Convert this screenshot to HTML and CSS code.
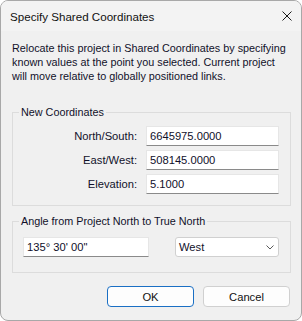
FILE: index.html
```html
<!DOCTYPE html>
<html>
<head>
<meta charset="utf-8">
<link rel="stylesheet" href="styles.css">
</head>
<body>
<div class="window">
  <div class="titlebar">
    <span class="title">Specify Shared Coordinates</span>
    <svg class="close" width="10" height="10" viewBox="0 0 10 10"><path d="M0.5 0.5 L9.5 9.5 M9.5 0.5 L0.5 9.5" /></svg>
  </div>
  <div class="client">
    <p class="desc">Relocate this project in Shared Coordinates by specifying<br>known values at the point you selected. Current project<br>will move relative to globally positioned links.</p>
    <fieldset class="group coords">
      <legend>New Coordinates</legend>
      <div class="grid">
        <label class="lbl">North/South:</label><div class="field">6645975.0000</div>
        <label class="lbl">East/West:</label><div class="field">508145.0000</div>
        <label class="lbl">Elevation:</label><div class="field">5.1000</div>
      </div>
    </fieldset>
    <fieldset class="group angle">
      <legend>Angle from Project North to True North</legend>
      <div class="angle-row">
        <div class="field angle-field">135° 30' 00"</div>
        <div class="select"><span>West</span><svg class="chev" width="8" height="5" viewBox="0 0 8 5"><path d="M0.5 0.5 L4 4 L7.5 0.5" /></svg></div>
      </div>
    </fieldset>
    <div class="buttons">
      <button class="btn primary">OK</button>
      <button class="btn">Cancel</button>
    </div>
  </div>
</div>
</body>
</html>
```
FILE: styles.css
```css
* { box-sizing: border-box; }
body {
  margin: 0;
  background: #ffffff;
  font-family: "Liberation Sans", "Segoe UI", sans-serif;
  font-size: 10.8px;
  color: #10102a;
}
.window {
  width: 302px;
  height: 321px;
  border: 1px solid #a8a8a8;
  border-radius: 8px;
  background: #f0f0f0;
  overflow: hidden;
  display: flex;
  flex-direction: column;
}
.titlebar {
  height: 30px;
  flex: none;
  background: #f3f3f3;
  display: flex;
  align-items: center;
  justify-content: space-between;
  padding: 0 9px;
}
.title {
  font-size: 11.6px;
  color: #111111;
}
.close path {
  stroke: #1a1a1a;
  stroke-width: 1;
  fill: none;
}
.client {
  padding: 0 10px 0 11px;
}
.desc {
  margin: 10px 0 0 0;
  line-height: 14px;
  white-space: nowrap;
}
.group {
  margin: 22px 0 0 0;
  border: 1px solid #dcdcdc;
  padding: 7px 11px 11px 0;
  min-width: 0;
}
.group legend {
  padding: 0 2px;
  margin-left: 6px;
  line-height: 14px;
}
.grid {
  display: grid;
  grid-template-columns: 1fr 133px;
  column-gap: 9px;
  row-gap: 4px;
}
.lbl {
  text-align: right;
  line-height: 20px;
  font-size: 11.2px;
}
.field {
  height: 20px;
  background: #ffffff;
  border: 1px solid #e6e6e6;
  border-bottom-color: #8a8a8a;
  padding-left: 3px;
  line-height: 18px;
  white-space: nowrap;
  font-size: 11.2px;
}
.group.angle {
  margin-top: 8px;
  padding: 9px 11px 15px 0;
}
.angle-row {
  display: flex;
  gap: 26px;
  padding-left: 10px;
}
.angle-field {
  width: 126px;
}
.select {
  width: 104px;
  height: 20px;
  background: #ffffff;
  border: 1px solid #d0d0d0;
  border-radius: 3px;
  padding: 0 4px 0 3px;
  display: flex;
  align-items: center;
  justify-content: space-between;
  line-height: 18px;
  font-size: 11.2px;
}
.chev path {
  stroke: #5a5a5a;
  stroke-width: 1;
  fill: none;
}
.buttons {
  margin-top: 13px;
  display: flex;
  justify-content: flex-end;
  gap: 9px;
  padding-right: 1px;
}
.btn {
  width: 87px;
  height: 21px;
  font-family: inherit;
  font-size: 11.2px;
  color: #111111;
  background: #fdfdfd;
  border: 1px solid #d0d0d0;
  border-radius: 4px;
  padding: 0;
}
.btn.primary {
  border-color: #1a6fc4;
}
```
